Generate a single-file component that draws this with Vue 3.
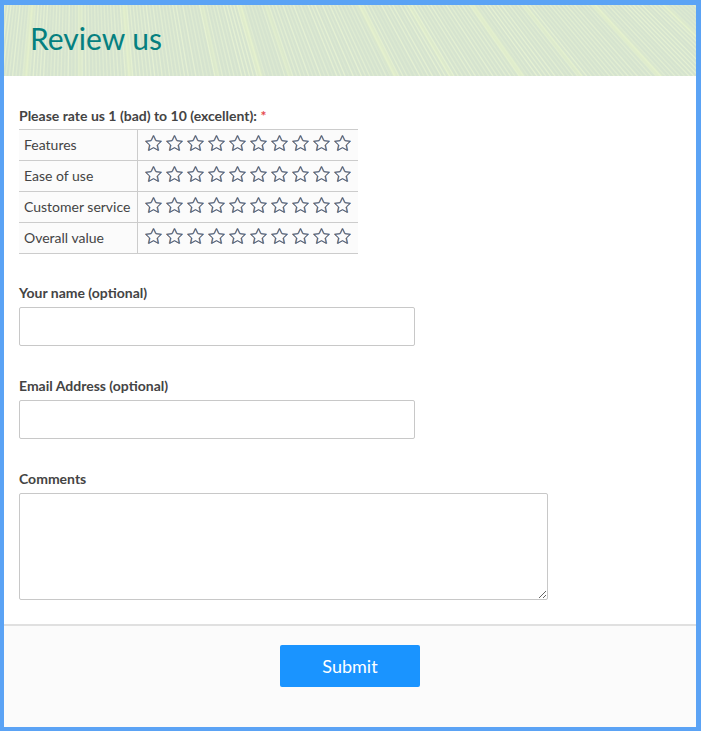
<template>
  <div class="frame">
    <header class="banner">
      <svg class="fronds" width="692" height="71" aria-hidden="true">
        <defs>
          <filter id="soft"><feGaussianBlur stdDeviation="1.4" /></filter>
        </defs>
        <line
          v-for="(l, i) in fronds"
          :key="i"
          :x1="l.x1"
          y1="-4"
          :x2="l.x2"
          y2="75"
          :stroke="l.color"
          :stroke-width="l.width"
          :opacity="l.opacity"
        />
        <g filter="url(#soft)">
          <line
            v-for="(l, i) in ribs"
            :key="i"
            :x1="l.x1"
            y1="-4"
            :x2="l.x2"
            y2="75"
            stroke="#e9f5c9"
            :stroke-width="l.width"
            opacity="0.65"
          />
        </g>
      </svg>
      <h1>Review us</h1>
    </header>

    <form class="body" @submit.prevent>
      <div class="rate-label">Please rate us 1 (bad) to 10 (excellent): <span class="req">*</span></div>
      <table class="rates">
        <tbody>
          <tr v-for="row in rows" :key="row">
            <td class="name">{{ row }}</td>
            <td class="stars">
              <svg v-for="n in 10" :key="n" class="star" width="21" height="18" viewBox="0 0 21 18">
                <path class="warm" :d="starPath" />
                <path class="cool" :d="starPath" />
                <path class="ink" :d="starPath" />
              </svg>
            </td>
          </tr>
        </tbody>
      </table>

      <label class="field first">
        <span>Your name (optional)</span>
        <input type="text" />
      </label>
      <label class="field">
        <span>Email Address (optional)</span>
        <input type="text" />
      </label>
      <label class="field">
        <span>Comments</span>
        <textarea></textarea>
      </label>
    </form>

    <footer class="foot">
      <button type="button">Submit</button>
    </footer>
  </div>
</template>

<script setup>
const rows = ['Features', 'Ease of use', 'Customer service', 'Overall value']
const starPath = 'M10.5 1.6 L12.9 6.7 L18.3 7.3 L14.3 11 L15.4 16.4 L10.5 13.7 L5.6 16.4 L6.7 11 L2.7 7.3 L8.1 6.7 Z'

// palm frond lines, all fanning out of one point high above the banner
const focusX = 75
const focusY = -560
const spread = (y) => (y - focusY) / -focusY
const at = (x, y) => focusX + (x - focusX) * spread(y)

let seed = 7
function rnd() {
  seed = (seed * 16807) % 2147483647
  return seed / 2147483647
}

const fronds = []
let x = -80
while (x < 800) {
  fronds.push({
    x1: at(x, -4),
    x2: at(x, 75),
    color: '#e8f3d4',
    width: 1.3,
    opacity: 0.35 + rnd() * 0.55
  })
  x += 3 + Math.max(0, x) * 0.002
}

const ribs = [28, 76, 120, 198, 236, 262, 356, 405, 468, 520, 590, 660].map((r, i) => ({
  x1: at(r, -4),
  x2: at(r, 75),
  width: i % 2 ? 2.5 : 4
}))
</script>

<style scoped>
.frame {
  box-sizing: border-box;
  height: 731px;
  border-style: solid;
  border-color: #5ba3f5;
  border-width: 5px 5px 4px 4px;
  display: flex;
  flex-direction: column;
  background: #fff;
  font-family: Lato, "Noto Sans", sans-serif;
  color: #444;
}

.banner {
  position: relative;
  height: 71px;
  flex: none;
  background: #d5e3cf;
  overflow: hidden;
}

.fronds {
  position: absolute;
  left: 0;
  top: 0;
}

.banner h1 {
  position: relative;
  margin: 0;
  padding: 13px 0 0 26px;
  font-size: 30px;
  line-height: 40px;
  font-weight: 400;
  color: #058080;
}

.body {
  flex: 1;
  padding: 31px 0 0 15px;
}

.rate-label {
  font-size: 14px;
  line-height: 18px;
  font-weight: 700;
  height: 22px;
}

.req {
  color: #e5484d;
}

.rates {
  border-collapse: collapse;
  width: 339px;
  background: #fbfbfb;
  table-layout: fixed;
}

.rates td {
  box-sizing: border-box;
  height: 31px;
  padding: 0;
  border-top: 1px solid #ccc;
  border-bottom: 1px solid #ccc;
  font-size: 14px;
}

.name {
  width: 118px;
  padding-left: 5px !important;
  padding-bottom: 2px !important;
  border-right: 1px solid #ccc;
}

.stars {
  padding-left: 5px !important;
  vertical-align: top;
  line-height: 0;
}

.star {
  display: inline-block;
  margin-top: 4px;
}

.star path {
  fill: none;
  stroke-linejoin: miter;
}

/* coloured edges, the reference stars are rendered with subpixel fringes */
.star .warm {
  stroke: #b9774a;
  stroke-width: 0.6;
  transform: translateX(-0.45px);
}

.star .cool {
  stroke: #3f8fe6;
  stroke-width: 0.6;
  transform: translateX(0.45px);
}

.star .ink {
  stroke: #434a58;
  stroke-width: 0.75;
}

.field {
  display: block;
  margin-top: 31px;
}

.field.first {
  margin-top: 30px;
}

.field span {
  display: block;
  font-size: 14px;
  line-height: 18px;
  font-weight: 700;
  margin-bottom: 5px;
}

.field input,
.field textarea {
  display: block;
  box-sizing: border-box;
  width: 396px;
  height: 39px;
  margin: 0;
  padding: 6px;
  border: 1px solid #c8c8c8;
  border-radius: 2px;
  background: #fff;
  outline: none;
}

.field textarea {
  width: 529px;
  height: 107px;
}

.foot {
  flex: none;
  height: 103px;
  box-sizing: border-box;
  border-top: 2px solid #e0e0e0;
  background: #fbfbfb;
  display: flex;
  justify-content: center;
  padding: 19px 0 0 0;
}

.foot button {
  width: 140px;
  height: 42px;
  border: 0;
  border-radius: 2px;
  background: #1a94ff;
  color: #fff;
  font-family: inherit;
  font-size: 18px;
}
</style>
